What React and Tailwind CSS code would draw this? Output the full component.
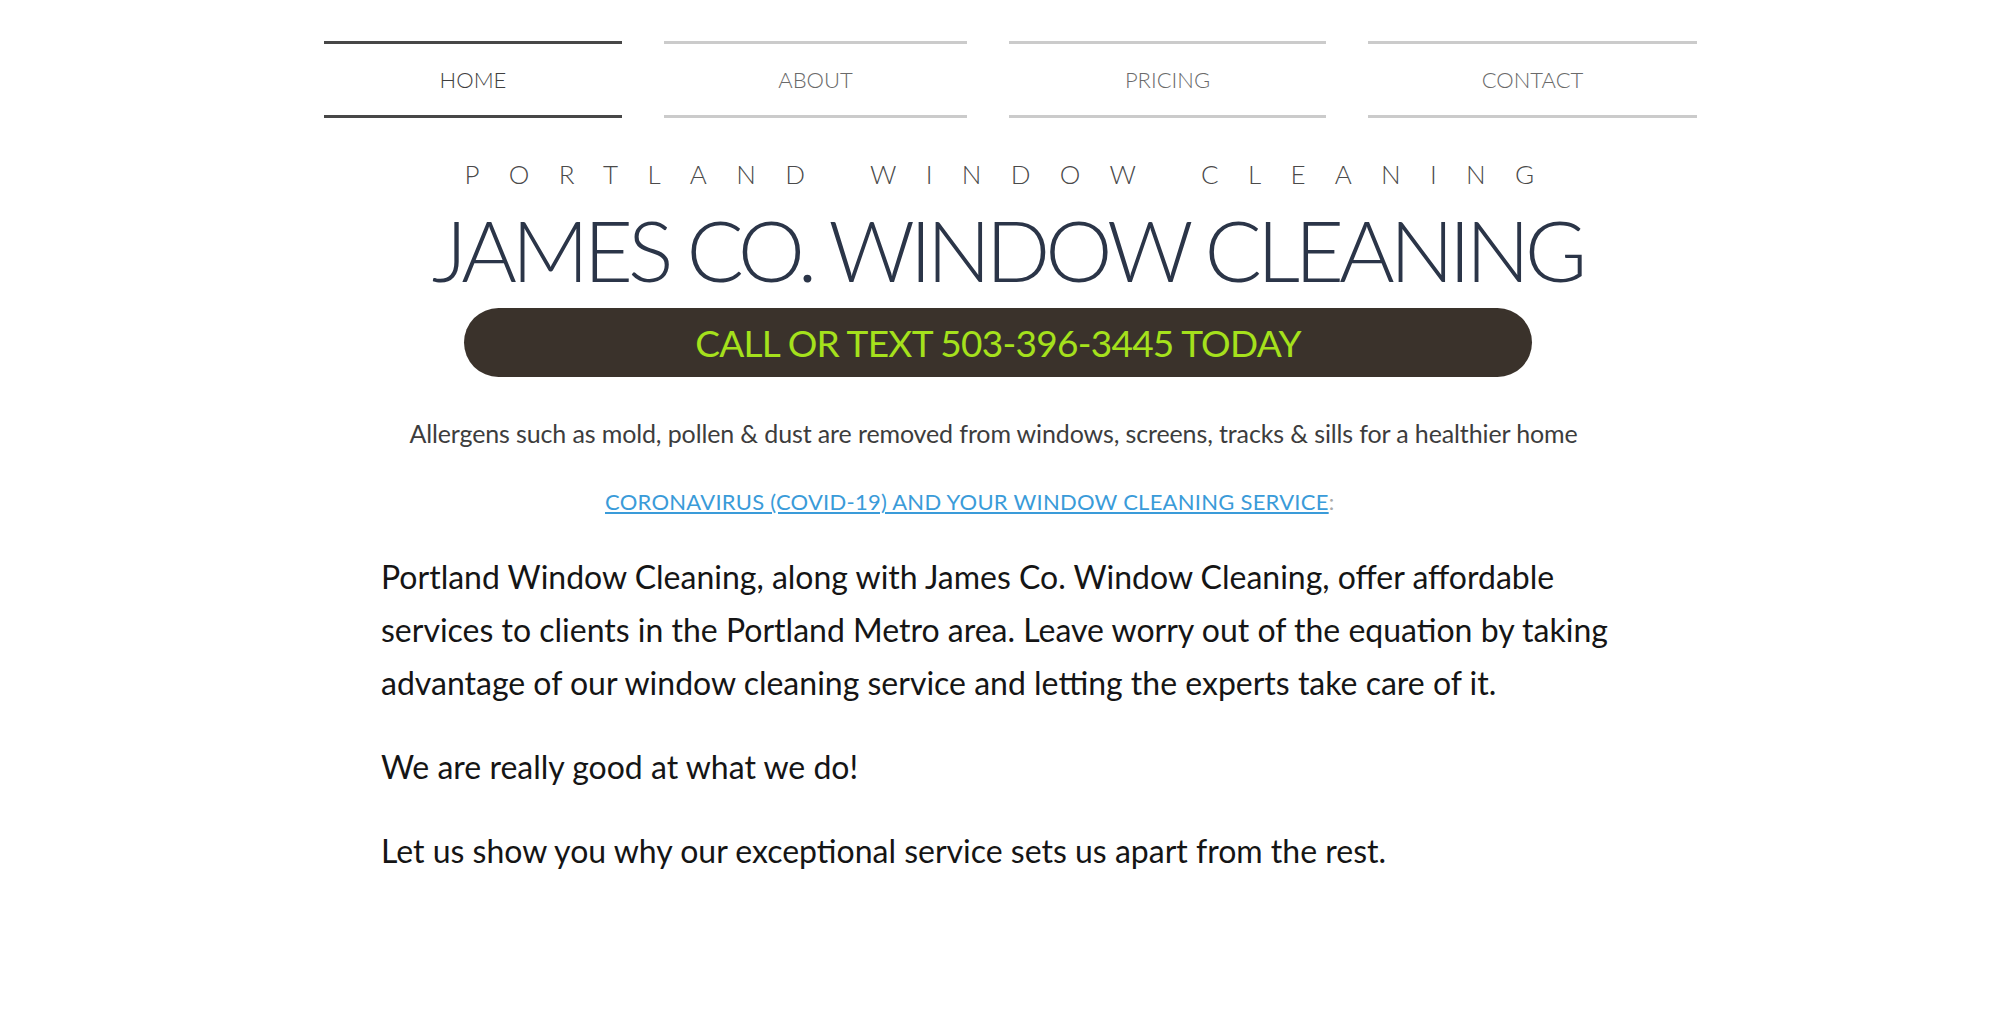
import React from "react";

const navItems = [
  { label: "HOME", w: "w-[298px]", active: true },
  { label: "ABOUT", w: "w-[303px]" },
  { label: "PRICING", w: "w-[317px]" },
  { label: "CONTACT", w: "w-[329px]" },
];

export default function App() {
  return (
    <div className="w-full min-h-[1036px] bg-white font-['Lato',sans-serif] pb-10">
      <nav className="ml-[324px] pt-[41px] flex gap-[42px]">
        {navItems.map((n) =>
          n.active ? (
            <a
              key={n.label}
              className={`${n.w} h-[77px] flex items-center justify-center border-y-[3px] border-[#474747] text-[22px] font-light text-[#3f3f3f]`}
            >
              {n.label}
            </a>
          ) : (
            <a
              key={n.label}
              className={`${n.w} h-[77px] flex items-center justify-center border-y-[3px] border-[#cbcbcb] text-[22px] font-light text-[#6a6a6a]`}
            >
              {n.label}
            </a>
          )
        )}
      </nav>

      <div className="ml-[324px] w-[1380px] text-center">
        <p className="mt-[41px] text-[26px] leading-[30px] tracking-[29.3px] font-light text-[#4a4a4a]">
          PORTLAND WINDOW CLEANING
        </p>
        <h1 className="mt-[15px] pr-[14px] text-[85px] leading-[91px] font-light tracking-[-0.06em] text-[#2b3548]">
          JAMES CO. WINDOW CLEANING
        </h1>
      </div>

      <div className="ml-[464px] mt-[13px] w-[1068px] h-[69px] rounded-full bg-[#3a322b] flex items-center justify-center">
        <span className="text-[37px] leading-none text-[#a5e11c] tracking-[-0.02em]">
          CALL OR TEXT 503-396-3445 TODAY
        </span>
      </div>

      <p className="mt-[40px] pr-[12px] text-center text-[25px] leading-[32px] tracking-[-0.005em] text-[#3d3d3d]">
        Allergens such as mold, pollen &amp; dust are removed from windows, screens, tracks &amp; sills for a healthier home
      </p>

      <p className="ml-[605px] mt-[40px] text-[22px] leading-[26px] tracking-[0.25px] text-[#aaaaaa]">
        <a className="underline text-[#3a9bd9] underline-offset-2">
          CORONAVIRUS (COVID-19) AND YOUR WINDOW CLEANING SERVICE
        </a>
        :
      </p>

      <div className="ml-[381px] mt-[35px] text-[32px] leading-[53px] text-[#151515] whitespace-nowrap">
        <p>
          Portland Window Cleaning, along with James Co. Window Cleaning, offer affordable
          <br />
          services to clients in the Portland Metro area. Leave worry out of the equation by taking
          <br />
          advantage of our window cleaning service and letting the experts take care of it.
        </p>
        <p className="mt-[31px]">We are really good at what we do!</p>
        <p className="mt-[31px]">Let us show you why our exceptional service sets us apart from the rest.</p>
      </div>
    </div>
  );
}
